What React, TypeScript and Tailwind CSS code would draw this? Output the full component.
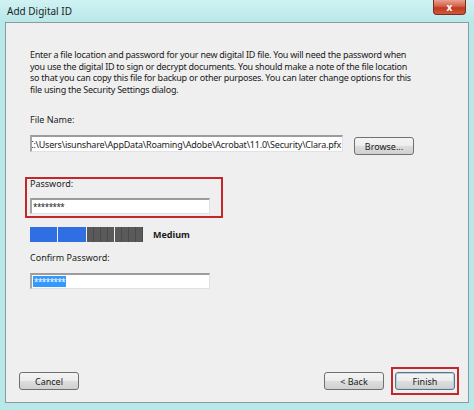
import React from "react";

const btn =
  "h-[18px] w-[60px] rounded-[3px] border border-[#707070] bg-[linear-gradient(#f4f4f4_0%,#ececec_50%,#dedede_50%,#d0d0d0_100%)] text-[9px] text-[#1a1a1a] font-['Noto_Sans',sans-serif] leading-none";

function TextBox({ className, children }: { className: string; children?: React.ReactNode }) {
  return (
    <div
      className={`flex items-center overflow-hidden bg-white border border-[#dfe3e8] border-t-2 border-l-2 border-t-[#9c9c9c] border-l-[#a6a6a6] ${className}`}
    >
      {children}
    </div>
  );
}

export default function App() {
  return (
    <div className="w-[474px] h-[410px] flex flex-col bg-[#b9e8e9] font-['Noto_Sans',sans-serif] text-[#1b1b1b] overflow-hidden">
      {/* title bar */}
      <div className="h-[22px] flex items-start bg-[linear-gradient(#d0f2f3,#b9e8e9)]">
        <span className="ml-[7px] mt-[4px] text-[10px] leading-[14px] text-[#1e1e1e]">Add Digital ID</span>
        <div className="ml-auto mr-[8px] w-[33px] h-[15px] rounded-b-[4px] border border-t-0 border-[#7e2a1c] bg-[linear-gradient(#e9a191_0%,#d3604a_45%,#c2391f_55%,#d0593c_100%)] flex items-center justify-center">
          <span className="text-white text-[10px] font-bold leading-none">x</span>
        </div>
      </div>

      {/* client panel */}
      <div className="flex-1 ml-[5px] mr-[5px] mb-[7px] border border-[#8d9ba1] bg-[#efefef] flex flex-col pl-[24px] pr-[20px] pt-[26px] pb-[12px] text-[9px]">
        <p className="leading-[11.5px] tracking-[-0.25px] whitespace-nowrap">
          <span className="block">Enter a file location and password for your new digital ID file. You will need the password when</span>
          <span className="block">you use the digital ID to sign or decrypt documents. You should make a note of the file location</span>
          <span className="block">so that you can copy this file for backup or other purposes. You can later change options for this</span>
          <span className="block">file using the Security Settings dialog.</span>
        </p>

        <div className="mt-[19px] leading-[12px]">File Name:</div>
        <div className="mt-[9px] flex items-start">
          <TextBox className="w-[313px] h-[17px] justify-end pr-[1px]">
            <span className="whitespace-nowrap tracking-[-0.2px] leading-none">C:\Users\isunshare\AppData\Roaming\Adobe\Acrobat\11.0\Security\Clara.pfx</span>
          </TextBox>
          <button className={`${btn} ml-[11px] mt-[2px]`}>Browse...</button>
        </div>

        <div className="mt-[22px] -ml-[5px] w-[198px] border-2 border-[#c3262b] pl-[3px] pb-[2px]">
          <div className="leading-[10px]">Password:</div>
          <TextBox className="mt-[9px] w-[180px] h-[16px] pl-[1px]">
            <span className="text-[8px] leading-none tracking-[-0.5px]">********</span>
          </TextBox>
        </div>

        <div className="mt-[9px] flex items-center">
          <div className="flex gap-[1px]">
            <div className="w-[27px] h-[15px] bg-[#2f6fe3]" />
            <div className="w-[28px] h-[15px] bg-[#2f6fe3]" />
            <div className="w-[27px] h-[15px] bg-[repeating-linear-gradient(90deg,#5a5a5a_0px,#5a5a5a_6px,#4a4a4a_6px,#4a4a4a_7px)]" />
            <div className="w-[28px] h-[15px] bg-[repeating-linear-gradient(90deg,#5a5a5a_0px,#5a5a5a_6px,#4a4a4a_6px,#4a4a4a_7px)]" />
          </div>
          <span className="ml-[10px] font-bold leading-none">Medium</span>
        </div>

        <div className="mt-[10px] leading-[12px]">Confirm Password:</div>
        <TextBox className="mt-[9px] w-[180px] h-[16px] pl-[1px]">
          <span className="bg-[#3399ff] text-white text-[8px] leading-[11px] tracking-[-0.5px] px-[1px]">********</span>
        </TextBox>

        <div className="mt-auto flex items-center -ml-[11px] -mr-[7px]">
          <button className={btn}>Cancel</button>
          <button className={`${btn} ml-auto`}>&lt; Back</button>
          <div className="relative ml-[11px]">
            <button className={`${btn} border-[#3c7fb1] shadow-[inset_0_0_0_1px_#9fd8f5]`}>Finish</button>
            <span className="absolute -left-[4px] -right-[4px] -top-[5px] -bottom-[5px] border-2 border-[#c3262b]" />
          </div>
        </div>
      </div>
    </div>
  );
}
